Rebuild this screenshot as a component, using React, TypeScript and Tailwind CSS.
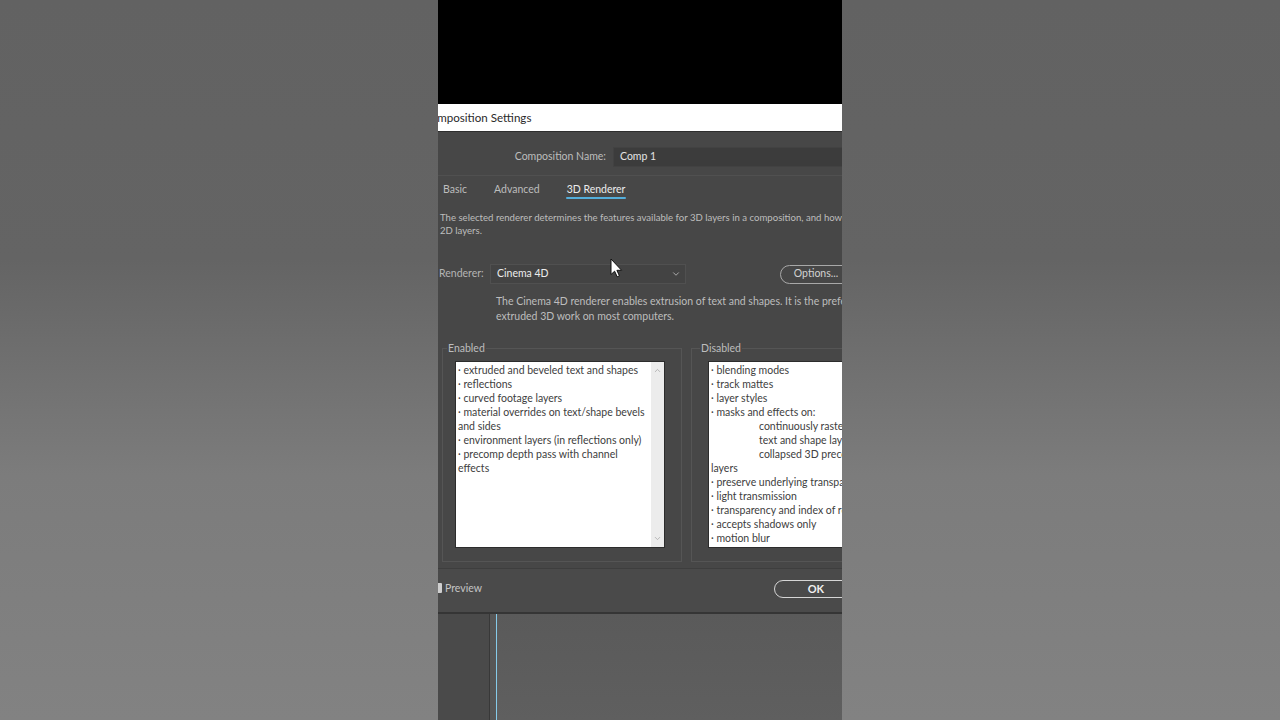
import { ChevronDown, ChevronUp } from 'lucide-react';

type Line = { text: string; indent?: boolean };

const enabledLines: Line[] = [
  { text: '· extruded and beveled text and shapes' },
  { text: '· reflections' },
  { text: '· curved footage layers' },
  { text: '· material overrides on text/shape bevels' },
  { text: 'and sides' },
  { text: '· environment layers (in reflections only)' },
  { text: '· precomp depth pass with channel' },
  { text: 'effects' },
];

const disabledLines: Line[] = [
  { text: '· blending modes' },
  { text: '· track mattes' },
  { text: '· layer styles' },
  { text: '· masks and effects on:' },
  { text: 'continuously rasterized', indent: true },
  { text: 'text and shape layers', indent: true },
  { text: 'collapsed 3D precomps', indent: true },
  { text: 'layers' },
  { text: '· preserve underlying transparency' },
  { text: '· light transmission' },
  { text: '· transparency and index of refraction' },
  { text: '· accepts shadows only' },
  { text: '· motion blur' },
];

function ListBox({ lines, scrollbar }: { lines: Line[]; scrollbar?: boolean }) {
  return (
    <div className="flex h-[187px] border border-[#2c2c2c] bg-white">
      <div className="flex-1 overflow-hidden pl-[2px] pt-[1px] text-[10.5px] leading-[14px] text-[#404040]">
        {lines.map((line, i) => (
          <div key={i} className={`whitespace-nowrap ${line.indent ? 'pl-[48px]' : ''}`}>
            {line.text}
          </div>
        ))}
      </div>
      {scrollbar && (
        <div className="flex w-[13px] flex-col items-center justify-between bg-[#ececec] py-[4px]">
          <ChevronUp className="h-[9px] w-[9px] text-[#a6a6a6]" strokeWidth={2} />
          <ChevronDown className="h-[9px] w-[9px] text-[#a6a6a6]" strokeWidth={2} />
        </div>
      )}
    </div>
  );
}

function Cursor() {
  return (
    <svg
      className="absolute left-[172px] top-[258px] h-[20px] w-[13px]"
      viewBox="0 0 13 20"
      fill="none"
    >
      <path
        d="M1 1 L1 16.5 L4.6 13.2 L7.2 18.8 L9.4 17.8 L6.9 12.3 L11.6 12.3 Z"
        fill="#ffffff"
        stroke="#111111"
        strokeWidth="1"
        strokeLinejoin="round"
      />
    </svg>
  );
}

export default function App() {
  const side =
    'flex-1 bg-[linear-gradient(to_bottom,#626262_0%,#646464_36%,#7c7c7c_66%,#828282_100%)]';

  return (
    <div className="flex h-[720px] w-[1280px] overflow-hidden font-[Lato,sans-serif]">
      <div className={side} />

      <div className="relative flex h-[720px] w-[404px] shrink-0 flex-col overflow-hidden bg-black">
        <div className="h-[104px] shrink-0 bg-black" />

        <div className="flex w-[520px] shrink-0 flex-col">
          <div className="flex h-[28px] items-center border-b border-[#2e2e2e] bg-white">
            <span className="-ml-[15px] whitespace-nowrap text-[11.6px] text-[#2a2a2a]">
              Composition Settings
            </span>
          </div>

          <div className="flex flex-col bg-[#474747] text-[#bdbdbd]">
            <div className="flex items-center pt-[15px]">
              <div className="w-[168px] text-right text-[10.5px]">Composition Name:</div>
              <div className="ml-[7px] flex h-[20px] flex-1 items-center border border-[#424242] bg-[#3c3c3c] pl-[6px] text-[10.5px] text-[#e4e4e4]">
                Comp 1
              </div>
            </div>
            <div className="mt-[8px] border-b border-[#505050]" />

            <div className="flex text-[10.5px] leading-[14px]">
              <div className="ml-[5px] flex flex-col pt-[6px]">
                <span>Basic</span>
                <span className="mt-[1px] h-[2px]" />
              </div>
              <div className="ml-[27px] flex flex-col pt-[6px]">
                <span>Advanced</span>
                <span className="mt-[1px] h-[2px]" />
              </div>
              <div className="ml-[26px] flex flex-col pt-[6px]">
                <span className="px-[1px] text-[#ececec]">3D Renderer</span>
                <span className="mt-[1px] h-[2px] rounded-full bg-[#54aedb]" />
              </div>
            </div>

            <div className="ml-[2px] mt-[12px] text-[9.6px] leading-[13px]">
              <div className="whitespace-nowrap">
                The selected renderer determines the features available for 3D layers in a composition, and how they interact with
              </div>
              <div className="whitespace-nowrap">2D layers.</div>
            </div>

            <div className="mt-[27px] flex h-[20px] items-center">
              <div className="ml-[1px] w-[51px] text-[10.5px] text-[#b4b4b4]">Renderer:</div>
              <div className="flex h-[20px] w-[196px] items-center justify-between border border-[#505050] bg-[#434343] pl-[6px] pr-[4px] text-[10.5px] text-[#ececec]">
                <span>Cinema 4D</span>
                <ChevronDown className="h-[10px] w-[10px] text-[#bdbdbd]" strokeWidth={2} />
              </div>
              <div className="ml-[94px] flex h-[19px] w-[72px] items-center justify-center rounded-full border border-[#a8a8a8] text-[10.5px] text-[#d2d2d2]">
                Options...
              </div>
            </div>

            <div className="ml-[58px] mt-[10px] text-[10.5px] leading-[15px]">
              <div className="whitespace-nowrap">
                The Cinema 4D renderer enables extrusion of text and shapes. It is the preferred renderer for
              </div>
              <div className="whitespace-nowrap">extruded 3D work on most computers.</div>
            </div>

            <div className="mt-[17px] flex">
              <fieldset className="ml-[4px] w-[240px] border border-[#555555] px-[12px] pb-[13px] pt-[6px]">
                <legend className="-ml-[8px] px-[1px] text-[10.5px] leading-[14px] text-[#bdbdbd]">
                  Enabled
                </legend>
                <div className="mr-[4px]">
                  <ListBox lines={enabledLines} scrollbar />
                </div>
              </fieldset>
              <fieldset className="ml-[9px] w-[260px] border border-[#555555] px-[16px] pb-[13px] pt-[6px]">
                <legend className="-ml-[8px] px-[1px] text-[10.5px] leading-[14px] text-[#bdbdbd]">
                  Disabled
                </legend>
                <ListBox lines={disabledLines} />
              </fieldset>
            </div>

            <div className="mt-[6px] flex h-[44px] items-start border-t border-[#3e3e3e] bg-[#4a4a4a] pt-[11px]">
              <div className="-ml-[5px] mt-[3px] h-[10px] w-[9px] rounded-[1px] bg-[#cfcfcf]" />
              <div className="ml-[3px] mt-[1px] text-[10.5px] leading-[14px] text-[#c4c4c4]">Preview</div>
              <div className="ml-[292px] flex h-[18px] w-[84px] items-center justify-center rounded-full border-[1.5px] border-[#d6d6d6] text-[11px] font-bold text-[#f0f0f0]">
                OK
              </div>
            </div>
          </div>
        </div>

        <div className="flex flex-1 border-t-2 border-[#353535] bg-[#5d5d5d]">
          <div className="w-[51px] bg-[#4a4a4a]" />
          <div className="w-[1px] bg-[#383838]" />
          <div className="w-[6px] bg-[#575757]" />
          <div className="w-[1px] bg-[#86cbea]" />
          <div className="flex-1 bg-[linear-gradient(to_bottom,#5a5a5a,#5f5f5f)]" />
        </div>

        <Cursor />
      </div>

      <div className={side} />
    </div>
  );
}
